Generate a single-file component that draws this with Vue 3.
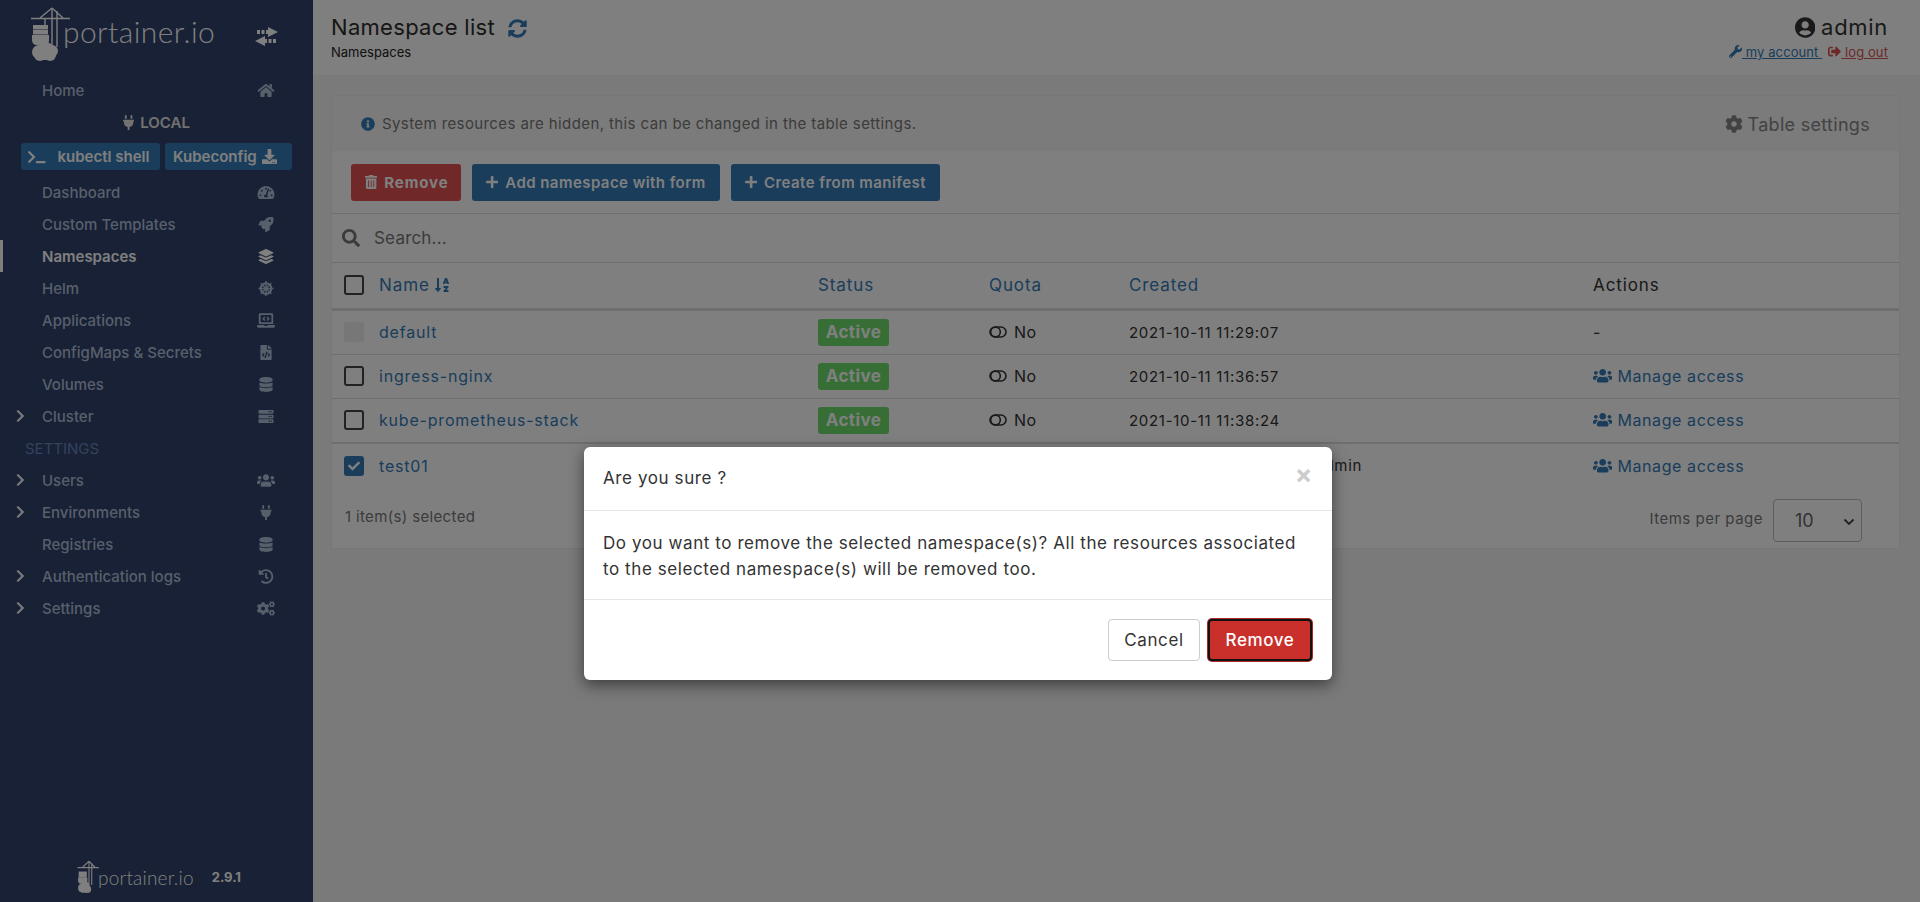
<script setup>
import { h } from 'vue'

const I = {
  home: [576, 'M280.37 148.26L96 300.11V464a16 16 0 0 0 16 16l112.06-.29a16 16 0 0 0 15.92-16V368a16 16 0 0 1 16-16h64a16 16 0 0 1 16 16v95.64a16 16 0 0 0 16 16.05L464 480a16 16 0 0 0 16-16V300L295.67 148.26a12.19 12.19 0 0 0-15.3 0zM571.6 251.47L488 182.56V44.05a12 12 0 0 0-12-12h-56a12 12 0 0 0-12 12v72.61L318.47 43a48 48 0 0 0-61 0L4.34 251.47a12 12 0 0 0-1.6 16.9l25.5 31A12 12 0 0 0 45.15 301l235.22-193.74a12.19 12.19 0 0 1 15.3 0L530.9 301a12 12 0 0 0 16.9-1.6l25.5-31a12 12 0 0 0-1.7-16.93z'],
  plug: [384, 'M320,32a32,32,0,0,0-64,0v96h64Zm48,128H16A16,16,0,0,0,0,176v32a16,16,0,0,0,16,16H32v32A160.07,160.07,0,0,0,160,412.8V512h64V412.8A160.07,160.07,0,0,0,352,256V224h16a16,16,0,0,0,16-16V176A16,16,0,0,0,368,160ZM128,32a32,32,0,0,0-64,0v96h64Z'],
  terminal: [640, 'M257.981 272.971L63.638 467.314c-9.373 9.373-24.569 9.373-33.941 0L7.029 444.647c-9.357-9.357-9.375-24.522-.04-33.901L161.011 256 6.99 101.255c-9.335-9.379-9.317-24.544.04-33.901l22.667-22.667c9.373-9.373 24.569-9.373 33.941 0L257.981 239.03c9.373 9.372 9.373 24.568 0 33.941zM640 456v-32c0-13.255-10.745-24-24-24H312c-13.255 0-24 10.745-24 24v32c0 13.255 10.745 24 24 24h304c13.255 0 24-10.745 24-24z'],
  download: [512, 'M216 0h80c13.3 0 24 10.7 24 24v168h87.7c17.8 0 26.7 21.5 14.1 34.1L269.7 378.3c-7.5 7.5-19.8 7.5-27.3 0L90.1 226.1c-12.6-12.6-3.7-34.1 14.1-34.1H192V24c0-13.3 10.7-24 24-24zm296 376v112c0 13.3-10.7 24-24 24H24c-13.3 0-24-10.7-24-24V376c0-13.3 10.7-24 24-24h146.7l49 49c20.1 20.1 52.5 20.1 72.6 0l49-49H488c13.3 0 24 10.7 24 24zm-124 88c0-11-9-20-20-20s-20 9-20 20 9 20 20 20 20-9 20-20zm64 0c0-11-9-20-20-20s-20 9-20 20 9 20 20 20 20-9 20-20z'],
  sync: [512, 'M370.72 133.28C339.458 104.008 298.888 87.962 255.848 88c-77.458.068-144.328 53.178-162.791 126.85-1.344 5.363-6.122 9.15-11.651 9.15H24.103c-7.498 0-13.194-6.807-11.807-14.176C33.933 94.924 134.813 8 256 8c66.448 0 126.791 26.136 171.315 68.685L463.03 40.97C478.149 25.851 504 36.559 504 57.941V192c0 13.255-10.745 24-24 24H345.941c-21.382 0-32.09-25.851-16.971-40.971l41.75-41.749zM32 296h134.059c21.382 0 32.09 25.851 16.971 40.971l-41.75 41.75c31.262 29.273 71.835 45.319 114.876 45.28 77.418-.07 144.315-53.144 162.787-126.849 1.344-5.363 6.122-9.15 11.651-9.15h57.304c7.498 0 13.194 6.807 11.807 14.176C478.067 417.076 377.187 504 256 504c-66.448 0-126.791-26.136-171.315-68.685L48.97 471.03C33.851 486.149 8 475.441 8 454.059V320c0-13.255 10.745-24 24-24z'],
  info: [512, 'M256 8C119.043 8 8 119.083 8 256c0 136.997 111.043 248 248 248s248-111.003 248-248C504 119.083 392.957 8 256 8zm0 110c23.196 0 42 18.804 42 42s-18.804 42-42 42-42-18.804-42-42 18.804-42 42-42zm56 254c0 6.627-5.373 12-12 12h-88c-6.627 0-12-5.373-12-12v-24c0-6.627 5.373-12 12-12h12v-64h-12c-6.627 0-12-5.373-12-12v-24c0-6.627 5.373-12 12-12h64c6.627 0 12 5.373 12 12v100h12c6.627 0 12 5.373 12 12v24z'],
  plus: [448, 'M416 208H272V64c0-17.67-14.33-32-32-32h-32c-17.67 0-32 14.33-32 32v144H32c-17.67 0-32 14.33-32 32v32c0 17.67 14.33 32 32 32h144v144c0 17.67 14.33 32 32 32h32c17.67 0 32-14.33 32-32V304h144c17.67 0 32-14.33 32-32v-32c0-17.67-14.33-32-32-32z'],
  search: [512, 'M505 442.7L405.3 343c-4.5-4.5-10.6-7-17-7H372c27.6-35.3 44-79.7 44-128C416 93.1 322.9 0 208 0S0 93.1 0 208s93.1 208 208 208c48.3 0 92.7-16.4 128-44v16.3c0 6.4 2.5 12.5 7 17l99.7 99.7c9.4 9.4 24.6 9.4 33.9 0l28.3-28.3c9.4-9.4 9.4-24.6.1-34zM208 336c-70.7 0-128-57.2-128-128 0-70.7 57.2-128 128-128 70.7 0 128 57.2 128 128 0 70.7-57.2 128-128 128z'],
  trash: [448, 'M32 464a48 48 0 0 0 48 48h288a48 48 0 0 0 48-48V128H32zm272-256a16 16 0 0 1 32 0v224a16 16 0 0 1-32 0zm-96 0a16 16 0 0 1 32 0v224a16 16 0 0 1-32 0zm-96 0a16 16 0 0 1 32 0v224a16 16 0 0 1-32 0zM432 32H312l-9.4-18.7A24 24 0 0 0 281.1 0H166.8a23.72 23.72 0 0 0-21.4 13.3L136 32H16A16 16 0 0 0 0 48v32a16 16 0 0 0 16 16h416a16 16 0 0 0 16-16V48a16 16 0 0 0-16-16z'],
  user: [496, 'M248 8C111 8 0 119 0 256s111 248 248 248 248-111 248-248S385 8 248 8zm0 96c48.6 0 88 39.4 88 88s-39.4 88-88 88-88-39.4-88-88 39.4-88 88-88zm0 344c-58.7 0-111.3-26.6-146.5-68.2 18.8-35.4 55.6-59.8 98.5-59.8 2.4 0 4.8.4 7.1 1.1 13 4.2 26.6 6.9 40.9 6.9 14.3 0 28-2.7 40.9-6.9 2.3-.7 4.7-1.1 7.1-1.1 42.9 0 79.7 24.4 98.5 59.8C359.3 421.4 306.7 448 248 448z'],
  wrench: [512, 'M507.73 109.1c-2.24-9.03-13.54-12.09-20.12-5.51l-74.36 74.36-67.88-11.31-11.31-67.88 74.36-74.36c6.62-6.62 3.43-17.9-5.66-20.16-47.38-11.74-99.55.91-136.58 37.93-39.64 39.64-50.55 97.1-34.05 147.2L18.74 402.76c-24.99 24.99-24.99 65.51 0 90.5 24.99 24.99 65.51 24.99 90.5 0l213.21-213.21c50.12 16.71 107.47 5.68 147.37-34.22 37.07-37.07 49.7-89.32 37.91-136.73zM64 472c-13.25 0-24-10.75-24-24 0-13.26 10.75-24 24-24s24 10.74 24 24c0 13.25-10.75 24-24 24z'],
  signout: [512, 'M497 273L329 441c-15 15-41 4.5-41-17v-96H152c-13.3 0-24-10.7-24-24v-96c0-13.3 10.7-24 24-24h136V88c0-21.4 25.9-32 41-17l168 168c9.3 9.4 9.3 24.6 0 34zM192 436v-40c0-6.6-5.4-12-12-12H96c-17.7 0-32-14.3-32-32V160c0-17.7 14.3-32 32-32h84c6.6 0 12-5.4 12-12V76c0-6.6-5.4-12-12-12H96c-53 0-96 43-96 96v192c0 53 43 96 96 96h84c6.6 0 12-5.4 12-12z'],
  cog: [512, 'M487.4 315.7l-42.6-24.6c4.3-23.2 4.3-47 0-70.2l42.6-24.6c4.9-2.8 7.1-8.6 5.5-14-11.1-35.6-30-67.8-54.7-94.6-3.8-4.1-10-5.1-14.8-2.3L380.8 110c-17.9-15.4-38.5-27.3-60.8-35.1V25.8c0-5.6-3.9-10.5-9.4-11.7-36.7-8.2-74.3-7.8-109.2 0-5.5 1.2-9.4 6.1-9.4 11.7V75c-22.2 7.9-42.8 19.8-60.8 35.1L88.7 85.5c-4.9-2.8-11-1.9-14.8 2.3-24.7 26.7-43.6 58.9-54.7 94.6-1.7 5.4.6 11.2 5.5 14L67.3 221c-4.3 23.2-4.3 47 0 70.2l-42.6 24.6c-4.9 2.8-7.1 8.6-5.5 14 11.1 35.6 30 67.8 54.7 94.6 3.8 4.1 10 5.1 14.8 2.3l42.6-24.6c17.9 15.4 38.5 27.3 60.8 35.1v49.2c0 5.6 3.9 10.5 9.4 11.7 36.7 8.2 74.3 7.8 109.2 0 5.5-1.2 9.4-6.1 9.4-11.7v-49.2c22.2-7.9 42.8-19.8 60.8-35.1l42.6 24.6c4.9 2.8 11 1.9 14.8-2.3 24.7-26.7 43.6-58.9 54.7-94.6 1.5-5.5-.7-11.3-5.6-14.1zM256 336c-44.1 0-80-35.9-80-80s35.9-80 80-80 80 35.9 80 80-35.9 80-80 80z'],
  users: [640, 'M96 224c35.3 0 64-28.7 64-64s-28.7-64-64-64-64 28.7-64 64 28.7 64 64 64zm448 0c35.3 0 64-28.7 64-64s-28.7-64-64-64-64 28.7-64 64 28.7 64 64 64zm32 32h-64c-17.6 0-33.5 7.1-45.1 18.6 40.3 22.1 68.9 62 75.1 109.4h66c17.7 0 32-14.3 32-32v-32c0-35.3-28.7-64-64-64zm-256 0c61.9 0 112-50.1 112-112S381.9 32 320 32 208 82.1 208 144s50.1 112 112 112zm76.8 32h-8.3c-20.8 10-43.9 16-68.5 16s-47.6-6-68.5-16h-8.3C179.6 288 128 339.6 128 403.2V432c0 26.5 21.5 48 48 48h288c26.5 0 48-21.5 48-48v-28.8c0-63.6-51.6-115.2-115.2-115.2zm-223.7-13.4C161.5 263.1 145.6 256 128 256H64c-35.3 0-64 28.7-64 64v32c0 17.7 14.3 32 32 32h65.9c6.3-47.4 34.9-87.3 75.2-109.4z'],
  database: [448, 'M448 73.143v45.714C448 159.143 347.667 192 224 192S0 159.143 0 118.857V73.143C0 32.857 100.333 0 224 0s224 32.857 224 73.143zM448 176v102.857C448 319.143 347.667 352 224 352S0 319.143 0 278.857V176c48.125 33.143 136.208 48.572 224 48.572S399.874 209.143 448 176zm0 160v102.857C448 479.143 347.667 512 224 512S0 479.143 0 438.857V336c48.125 33.143 136.208 48.572 224 48.572S399.874 369.143 448 336z'],
  server: [512, 'M480 160H32c-17.673 0-32-14.327-32-32V64c0-17.673 14.327-32 32-32h448c17.673 0 32 14.327 32 32v64c0 17.673-14.327 32-32 32zm-48-88c-13.255 0-24 10.745-24 24s10.745 24 24 24 24-10.745 24-24-10.745-24-24-24zm-64 0c-13.255 0-24 10.745-24 24s10.745 24 24 24 24-10.745 24-24-10.745-24-24-24zm112 248H32c-17.673 0-32-14.327-32-32v-64c0-17.673 14.327-32 32-32h448c17.673 0 32 14.327 32 32v64c0 17.673-14.327 32-32 32zm-48-88c-13.255 0-24 10.745-24 24s10.745 24 24 24 24-10.745 24-24-10.745-24-24-24zm-64 0c-13.255 0-24 10.745-24 24s10.745 24 24 24 24-10.745 24-24-10.745-24-24-24zm112 248H32c-17.673 0-32-14.327-32-32v-64c0-17.673 14.327-32 32-32h448c17.673 0 32 14.327 32 32v64c0 17.673-14.327 32-32 32zm-48-88c-13.255 0-24 10.745-24 24s10.745 24 24 24 24-10.745 24-24-10.745-24-24-24zm-64 0c-13.255 0-24 10.745-24 24s10.745 24 24 24 24-10.745 24-24-10.745-24-24-24z'],
  history: [512, 'M504 255.531c.253 136.64-111.18 248.372-247.82 248.468-59.015.042-113.223-20.53-155.822-54.911-11.077-8.94-11.905-25.541-1.839-35.607l11.267-11.267c8.609-8.609 22.353-9.551 31.891-1.984C173.062 425.135 212.781 440 256 440c101.705 0 184-82.311 184-184 0-101.705-82.311-184-184-184-48.814 0-93.149 18.969-126.068 49.932l50.754 50.754c10.08 10.08 2.941 27.314-11.313 27.314H24c-8.837 0-16-7.163-16-16V38.627c0-14.254 17.234-21.393 27.314-11.314l49.372 49.372C129.209 34.136 189.552 8 256 8c136.81 0 247.747 110.78 248 247.531zm-180.912 78.784l9.823-12.63c8.138-10.463 6.253-25.542-4.21-33.679L288 256.349V152c0-13.255-10.745-24-24-24h-16c-13.255 0-24 10.745-24 24v135.651l65.409 50.874c10.463 8.137 25.541 6.253 33.679-4.21z'],
  tacho: [576, 'M288 32C128.94 32 0 160.94 0 320c0 52.8 14.25 102.26 39.06 144.8 5.61 9.62 16.3 15.2 27.44 15.2h443c11.14 0 21.83-5.58 27.44-15.2C561.75 422.26 576 372.8 576 320c0-159.06-128.94-288-288-288zm0 64c14.71 0 26.58 10.13 30.32 23.65-1.11 2.26-2.64 4.23-3.45 6.67l-9.22 27.67c-5.13 3.49-10.97 6.01-17.64 6.01-17.67 0-32-14.33-32-32S270.33 96 288 96zM96 384c-17.67 0-32-14.33-32-32s14.33-32 32-32 32 14.33 32 32-14.33 32-32 32zm48-160c-17.67 0-32-14.33-32-32s14.33-32 32-32 32 14.33 32 32-14.33 32-32 32zm246.77-72.41l-61.33 184C343.13 347.33 352 364.54 352 384c0 11.72-3.38 22.55-8.88 32H232.88c-5.5-9.45-8.88-20.28-8.88-32 0-33.94 26.5-61.43 59.9-63.59l61.34-184.01c4.17-12.56 17.73-19.45 30.36-15.17 12.57 4.19 19.35 17.79 15.17 30.36zm14.66 57.2l15.52-46.55c3.47-1.29 7.13-2.23 11.05-2.23 17.67 0 32 14.33 32 32s-14.33 32-32 32c-11.38-.01-20.89-6.28-26.57-15.22zM480 384c-17.67 0-32-14.33-32-32s14.33-32 32-32 32 14.33 32 32-14.33 32-32 32z'],
  rocket: [512, 'M505.12019,19.09375c-1.18945-5.53125-6.65819-11-12.207-12.1875C460.716,0,435.507,0,410.40747,0,307.17523,0,245.26909,55.20312,199.05238,128H94.83772c-16.34763.01562-35.55658,11.875-42.88664,26.48438L2.51562,253.29688A28.4,28.4,0,0,0,0,264a24.00867,24.00867,0,0,0,24.00582,24H127.81618l-22.47457,22.46875c-11.36521,11.36133-12.99607,32.25781,0,45.25L156.24582,406.625c11.15623,11.1875,32.15619,13.15625,45.27726,0l22.47457-22.46875V488a24.00867,24.00867,0,0,0,24.00581,24,28.55934,28.55934,0,0,0,10.707-2.51562l98.72834-49.39063c14.62888-7.29687,26.50776-26.5,26.50776-42.85937V312.79688c72.59753-46.3125,128.03493-108.40626,128.03493-211.09376C512.07526,76.5,512.07526,51.29688,505.12019,19.09375ZM384.04033,168A40,40,0,1,1,424.05,128,40.02322,40.02322,0,0,1,384.04033,168Z'],
  layers: [512, 'M12.41 148.02l232.94 105.67c6.8 3.09 14.49 3.09 21.29 0l232.94-105.67c16.55-7.51 16.55-32.52 0-40.03L266.65 2.31a25.607 25.607 0 0 0-21.29 0L12.41 107.98c-16.55 7.51-16.55 32.53 0 40.04zm487.18 88.28l-58.09-26.33-161.64 73.27c-7.56 3.43-15.59 5.17-23.86 5.17s-16.29-1.74-23.86-5.17L70.51 209.97l-58.1 26.33c-16.55 7.5-16.55 32.5 0 40l232.94 105.59c6.8 3.08 14.49 3.08 21.29 0L499.59 276.3c16.55-7.5 16.55-32.5 0-40zm0 127.8l-57.87-26.23-161.86 73.37c-7.56 3.43-15.59 5.17-23.86 5.17s-16.29-1.74-23.86-5.17L70.29 337.87 12.41 364.1c-16.55 7.5-16.55 32.5 0 40l232.94 105.59c6.8 3.08 14.49 3.08 21.29 0L499.59 404.1c16.55-7.5 16.55-32.5 0-40z'],
  laptop: [640, 'M255.03 261.65c6.25 6.25 16.38 6.25 22.63 0l11.31-11.31c6.25-6.25 6.25-16.38 0-22.63L253.25 192l35.71-35.72c6.25-6.25 6.25-16.38 0-22.63l-11.31-11.31c-6.25-6.25-16.38-6.25-22.63 0l-58.34 58.34c-6.25 6.25-6.25 16.38 0 22.63l58.35 58.34zm96.01-11.3l11.31 11.31c6.25 6.25 16.38 6.25 22.63 0l58.34-58.34c6.25-6.25 6.25-16.38 0-22.63l-58.34-58.34c-6.25-6.25-16.38-6.25-22.63 0l-11.31 11.31c-6.25 6.25-6.25 16.38 0 22.63L386.75 192l-35.71 35.72c-6.25 6.25-6.25 16.38 0 22.63zM624 416H381.54c-.74 19.81-14.71 32-32.74 32H288c-18.69 0-33.02-17.47-32.77-32H16c-8.8 0-16 7.2-16 16v16c0 35.2 28.8 64 64 64h512c35.2 0 64-28.8 64-64v-16c0-8.8-7.2-16-16-16zM576 48c0-26.4-21.6-48-48-48H112C85.6 0 64 21.6 64 48v336h512V48zm-64 272H128V64h384v256z'],
  file: [384, 'M384 121.941V128H256V0h6.059c6.365 0 12.47 2.529 16.971 7.029l97.941 97.941A24.002 24.002 0 0 1 384 121.941zM248 160c-13.2 0-24-10.8-24-24V0H24C10.745 0 0 10.745 0 24v464c0 13.255 10.745 24 24 24h336c13.255 0 24-10.745 24-24V160H248zM123.206 400.505a5.4 5.4 0 0 1-7.633.246l-64.866-60.812a5.4 5.4 0 0 1 0-7.879l64.866-60.812a5.4 5.4 0 0 1 7.633.246l19.579 20.885a5.4 5.4 0 0 1-.372 7.747L101.65 336l40.763 35.874a5.4 5.4 0 0 1 .372 7.747l-19.579 20.884zm51.295 50.479l-27.453-7.97a5.402 5.402 0 0 1-3.681-6.692l61.44-211.626a5.402 5.402 0 0 1 6.692-3.681l27.452 7.97a5.4 5.4 0 0 1 3.68 6.692l-61.44 211.626a5.397 5.397 0 0 1-6.69 3.681zm160.792-111.045l-64.866 60.812a5.4 5.4 0 0 1-7.633-.246l-19.58-20.885a5.4 5.4 0 0 1 .373-7.747L284.35 336l-40.763-35.874a5.4 5.4 0 0 1-.373-7.747l19.58-20.885a5.4 5.4 0 0 1 7.633-.246l64.866 60.812a5.4 5.4 0 0 1 0 7.879z'],
  cogs: [640, 'M512.1 191l-8.2 14.3c-3 5.3-9.4 7.5-15.1 5.4-11.8-4.4-22.6-10.7-32.1-18.6-4.6-3.8-5.8-10.5-2.8-15.7l8.2-14.3c-6.9-8-12.3-17.3-15.9-27.4h-16.5c-6 0-11.2-4.3-12.2-10.3-2-12-2.1-24.6 0-37.1 1-6 6.2-10.4 12.2-10.4h16.5c3.6-10.1 9-19.4 15.9-27.4l-8.2-14.3c-3-5.2-1.9-11.9 2.8-15.7 9.5-7.9 20.4-14.2 32.1-18.6 5.7-2.1 12.1.1 15.1 5.4l8.2 14.3c10.5-1.9 21.2-1.9 31.7 0L552 6.3c3-5.3 9.4-7.5 15.1-5.4 11.8 4.4 22.6 10.7 32.1 18.6 4.6 3.8 5.8 10.5 2.8 15.7l-8.2 14.3c6.9 8 12.3 17.3 15.9 27.4h16.5c6 0 11.2 4.3 12.2 10.3 2 12 2.1 24.6 0 37.1-1 6-6.2 10.4-12.2 10.4h-16.5c-3.6 10.1-9 19.4-15.9 27.4l8.2 14.3c3 5.2 1.9 11.9-2.8 15.7-9.5 7.9-20.4 14.2-32.1 18.6-5.7 2.1-12.1-.1-15.1-5.4l-8.2-14.3c-10.4 1.9-21.2 1.9-31.7 0zm-10.5-58.8c38.5 29.6 82.4-14.3 52.8-52.8-38.5-29.7-82.4 14.3-52.8 52.8zM386.3 286.1l33.7 16.8c10.1 5.8 14.5 18.1 10.5 29.1-8.9 24.2-26.4 46.4-42.6 65.8-7.4 8.9-20.2 11.1-30.3 5.3l-29.1-16.8c-16 13.7-34.6 24.6-54.9 31.7v33.6c0 11.6-8.3 21.6-19.7 23.6-24.6 4.2-50.4 4.4-75.9 0-11.5-2-20-11.9-20-23.6V418c-20.3-7.2-38.9-18-54.9-31.7L74 403c-10 5.8-22.9 3.6-30.3-5.3-16.2-19.4-33.3-41.6-42.2-65.7-4-10.9.4-23.2 10.5-29.1l33.3-16.8c-3.9-20.9-3.9-42.4 0-63.4L12 205.8c-10.1-5.8-14.6-18.1-10.5-29 8.9-24.2 26-46.4 42.2-65.8 7.4-8.9 20.2-11.1 30.3-5.3l29.1 16.8c16-13.7 34.6-24.6 54.9-31.7V57.1c0-11.5 8.2-21.5 19.6-23.5 24.6-4.2 50.5-4.4 76-.1 11.5 2 20 11.9 20 23.6v33.6c20.3 7.2 38.9 18 54.9 31.7l29.1-16.8c10-5.8 22.9-3.6 30.3 5.3 16.2 19.4 33.2 41.6 42.1 65.8 4 10.9.1 23.2-10 29.1l-33.7 16.8c3.9 21 3.9 42.5 0 63.5zm-117.6 21.1c59.2-77-28.7-164.9-105.7-105.7-59.2 77 28.7 164.9 105.7 105.7zm243.4 182.7l-8.2 14.3c-3 5.3-9.4 7.5-15.1 5.4-11.8-4.4-22.6-10.7-32.1-18.6-4.6-3.8-5.8-10.5-2.8-15.7l8.2-14.3c-6.9-8-12.3-17.3-15.9-27.4h-16.5c-6 0-11.2-4.3-12.2-10.3-2-12-2.1-24.6 0-37.1 1-6 6.2-10.4 12.2-10.4h16.5c3.6-10.1 9-19.4 15.9-27.4l-8.2-14.3c-3-5.2-1.9-11.9 2.8-15.7 9.5-7.9 20.4-14.2 32.1-18.6 5.7-2.1 12.1.1 15.1 5.4l8.2 14.3c10.5-1.9 21.2-1.9 31.7 0l8.2-14.3c3-5.3 9.4-7.5 15.1-5.4 11.8 4.4 22.6 10.7 32.1 18.6 4.6 3.8 5.8 10.5 2.8 15.7l-8.2 14.3c6.9 8 12.3 17.3 15.9 27.4h16.5c6 0 11.2 4.3 12.2 10.3 2 12 2.1 24.6 0 37.1-1 6-6.2 10.4-12.2 10.4h-16.5c-3.6 10.1-9 19.4-15.9 27.4l8.2 14.3c3 5.2 1.9 11.9-2.8 15.7-9.5 7.9-20.4 14.2-32.1 18.6-5.7 2.1-12.1-.1-15.1-5.4l-8.2-14.3c-10.4 1.9-21.2 1.9-31.7 0zM501.6 431c38.5 29.6 82.4-14.3 52.8-52.8-38.5-29.6-82.4 14.3-52.8 52.8z'],
  chevron: [320, 'M285.476 272.971L91.132 467.314c-9.373 9.373-24.569 9.373-33.941 0l-22.667-22.667c-9.357-9.357-9.375-24.522-.04-33.901L188.505 256 34.484 101.255c-9.335-9.379-9.317-24.544.04-33.901l22.667-22.667c9.373-9.373 24.569-9.373 33.941 0L285.475 239.03c9.373 9.372 9.373 24.568.001 33.941z'],
  sort: [448, 'M176 352h-48V48a16 16 0 0 0-16-16H80a16 16 0 0 0-16 16v304H16c-14.19 0-21.36 17.24-11.3 27.31l80 96a16 16 0 0 0 22.62 0l80-96C197.35 369.26 190.22 352 176 352zm240-64H288a16 16 0 0 0-16 16v32a16 16 0 0 0 16 16h56l-61.26 70.45A32 32 0 0 0 272 446.37V464a16 16 0 0 0 16 16h128a16 16 0 0 0 16-16v-32a16 16 0 0 0-16-16h-56l61.26-70.45A32 32 0 0 0 432 321.63V304a16 16 0 0 0-16-16zm31.06-85.38l-59.27-160A16 16 0 0 0 372.72 32h-41.44a16 16 0 0 0-15.07 10.62l-59.27 160A16 16 0 0 0 272 224h24.83a16 16 0 0 0 15.23-11.08l4.42-12.92h71l4.41 12.92A16 16 0 0 0 407.16 224H432a16 16 0 0 0 15.06-21.38zM335.61 144L352 96l16.39 48z'],
  check: [512, 'M173.898 439.404l-166.4-166.4c-9.997-9.997-9.997-26.206 0-36.204l36.203-36.204c9.997-9.998 26.207-9.998 36.204 0L192 312.69 432.095 72.596c9.997-9.997 26.207-9.997 36.204 0l36.203 36.204c9.997 9.997 9.997 26.206 0 36.204l-294.4 294.401c-9.998 9.997-26.207 9.997-36.204-.001z']
}

const Fa = (props) => h('svg', { viewBox: `0 0 ${I[props.n][0]} 512`, class: 'fa', fill: 'currentColor' }, [h('path', { d: I[props.n][1] })])
Fa.props = ['n']

const topNav = [
  { t: 'Dashboard', i: 'tacho' },
  { t: 'Custom Templates', i: 'rocket' },
  { t: 'Namespaces', i: 'layers', active: true },
  { t: 'Helm', wheel: true },
  { t: 'Applications', i: 'laptop' },
  { t: 'ConfigMaps & Secrets', i: 'file' },
  { t: 'Volumes', i: 'database' },
  { t: 'Cluster', i: 'server', chev: true }
]
const setNav = [
  { t: 'Users', i: 'users', chev: true },
  { t: 'Environments', i: 'plug', chev: true },
  { t: 'Registries', i: 'database' },
  { t: 'Authentication logs', i: 'history', chev: true },
  { t: 'Settings', i: 'cogs', chev: true }
]
const rows = [
  { n: 'default', d: '2021-10-11 11:29:07', off: true },
  { n: 'ingress-nginx', d: '2021-10-11 11:36:57' },
  { n: 'kube-prometheus-stack', d: '2021-10-11 11:38:24', thick: true },
  { n: 'test01', d: '2021-10-12 09:14:33 by admin', sel: true }
]
</script>

<template>
  <div class="page">
    <aside class="side">
      <div class="brand">
        <svg class="crane" viewBox="0 0 44 56" width="44" height="56">
          <g fill="none" stroke="#fff" stroke-width="1.4">
            <path d="M1 12.500H40M22 2L10 12M22 2L33 12" />
            <path d="M22 2V41M27 5V41M15 12V19" />
          </g>
          <g fill="#fff">
            <rect x="3" y="19" width="15" height="4.500" />
            <rect x="3" y="24" width="15" height="4.500" />
            <path d="M2 29H19V35Q18 39 13 39H7Q2 39 2 34Z" />
            <circle cx="9" cy="46" r="7" />
            <circle cx="16" cy="43" r="7" />
            <circle cx="22" cy="45" r="6" />
            <circle cx="10" cy="49" r="6" />
            <circle cx="20" cy="49" r="6" />
            <rect x="8" y="42" width="14" height="12" />
          </g>
        </svg>
        <span class="brand-text">portainer.io</span>
        <svg class="swap" viewBox="0 0 23 21" width="23" height="21">
          <g fill="#fff">
            <path d="M2 4h3v4H2zM6.500 4h3v4h-3zM11 4h2V1l10 5-10 5V8h-2z" />
            <path d="M21 13h-3v4h3zM16.500 13h-3v4h3zM12 13h-2v-3L0 15l10 5v-3h2z" />
          </g>
        </svg>
      </div>
      <a class="nav"><span>Home</span><Fa n="home" class="nav-i" /></a>
      <div class="env"><Fa n="plug" class="env-i" />LOCAL</div>
      <div class="env-btns">
        <span class="ebtn shell"><Fa n="terminal" class="term" />kubectl shell</span>
        <span class="ebtn cfg">Kubeconfig<Fa n="download" class="dl" /></span>
      </div>
      <a v-for="x in topNav" :key="x.t" class="nav" :class="{ active: x.active }">
        <Fa v-if="x.chev" n="chevron" class="chev" />
        <span>{{ x.t }}</span>
        <svg v-if="x.wheel" class="fa nav-i" viewBox="0 0 16 16">
          <g fill="none" stroke="currentColor">
            <circle cx="8" cy="8" r="5.600" stroke-width="2.400" />
            <path d="M8 0V16M0 8H16M2.300 2.300L13.700 13.700M13.700 2.300L2.300 13.700" stroke-width="1.500" />
          </g>
          <circle cx="8" cy="8" r="2" fill="currentColor" />
        </svg>
        <Fa v-else :n="x.i" class="nav-i" />
      </a>
      <div class="section">SETTINGS</div>
      <a v-for="x in setNav" :key="x.t" class="nav">
        <Fa v-if="x.chev" n="chevron" class="chev" />
        <span>{{ x.t }}</span>
        <Fa :n="x.i" class="nav-i" />
      </a>
      <div class="foot">
        <svg class="crane-s" viewBox="0 0 44 56" width="24" height="34" preserveAspectRatio="none">
          <g fill="none" stroke="#fff" stroke-width="2">
            <path d="M1 12.500H40M22 2L10 12M22 2L33 12M22 2V41M27 5V41" />
          </g>
          <g fill="#fff">
            <rect x="3" y="19" width="15" height="10" />
            <path d="M2 29H19V35Q18 39 13 39H7Q2 39 2 34Z" />
            <circle cx="9" cy="46" r="7" />
            <circle cx="16" cy="43" r="7" />
            <circle cx="20" cy="48" r="6" />
            <rect x="8" y="42" width="12" height="12" />
          </g>
        </svg>
        <span class="foot-brand">portainer.io</span>
        <span class="ver">2.9.1</span>
      </div>
    </aside>

    <main class="main">
      <header class="top">
        <div>
          <div class="title">Namespace list <Fa n="sync" class="refresh" /></div>
          <div class="crumb">Namespaces</div>
        </div>
        <div class="who">
          <div class="admin"><Fa n="user" class="avatar" />admin</div>
          <div class="links">
            <a class="acc"><Fa n="wrench" class="li" /> my account </a>
            <a class="out"><Fa n="signout" class="li" /> log out</a>
          </div>
        </div>
      </header>

      <section class="widget">
        <div class="w-title">
          <span class="note"><Fa n="info" class="note-i" />System resources are hidden, this can be changed in the table settings.</span>
          <span class="tset"><Fa n="cog" class="tset-i" />Table settings</span>
        </div>
        <div class="actions">
          <button class="btn red"><Fa n="trash" class="bi" />Remove</button>
          <button class="btn blue"><Fa n="plus" class="bi" />Add namespace with form</button>
          <button class="btn blue"><Fa n="plus" class="bi" />Create from manifest</button>
        </div>
        <div class="search"><Fa n="search" class="s-i" /><span>Search...</span></div>
        <div class="grid head">
          <span class="cb"></span>
          <span class="lnk">Name <Fa n="sort" class="sort" /></span>
          <span class="lnk">Status</span>
          <span class="lnk">Quota</span>
          <span class="lnk">Created</span>
          <span>Actions</span>
        </div>
        <div v-for="r in rows" :key="r.n" class="grid row" :class="{ thick: r.thick, last: r.sel }">
          <span class="cb" :class="{ off: r.off, on: r.sel }"><Fa v-if="r.sel" n="check" class="ck" /></span>
          <span class="lnk name">{{ r.n }}</span>
          <span><span class="label">Active</span></span>
          <span class="quota">
            <svg class="tog" viewBox="0 0 18 12" width="18" height="12">
              <rect x="1" y="1" width="16" height="10" rx="5" fill="none" stroke="currentColor" stroke-width="1.600" />
              <circle cx="6.500" cy="6" r="4.800" fill="none" stroke="currentColor" stroke-width="1.600" />
            </svg>
            No
          </span>
          <span class="date">{{ r.d }}</span>
          <span v-if="r.off">-</span>
          <span v-else class="lnk manage"><Fa n="users" class="mi" />Manage access</span>
        </div>
        <div class="w-foot">
          <span class="sel">1 item(s) selected</span>
          <span class="per">Items per page</span>
          <span class="select">10
            <svg class="caret" viewBox="0 0 12 8" width="12" height="8"><path d="M1.500 1.500L6 6l4.500-4.500" fill="none" stroke="currentColor" stroke-width="1.800" /></svg>
          </span>
        </div>
      </section>
    </main>

    <div class="overlay">
      <div class="modal">
        <div class="m-head"><span>Are you sure ?</span><span class="x">×</span></div>
        <div class="m-body">Do you want to remove the selected namespace(s)? All the resources associated to the selected namespace(s) will be removed too.</div>
        <div class="m-foot">
          <button class="m-btn cancel">Cancel</button>
          <button class="m-btn remove">Remove</button>
        </div>
      </div>
    </div>
  </div>
</template>

<style>
html, body { margin: 0; height: 100%; background: #f4f4f4; }
</style>

<style scoped>
.page { position: relative; display: flex; height: 902px; overflow: hidden; font-family: Inter, "Noto Sans", sans-serif; color: #333; }
.fa { height: 1em; width: auto; display: inline-block; vertical-align: -0.125em; flex: none; }
button { font-family: inherit; }

.side { width: 313px; flex: none; background: #30426a; display: flex; flex-direction: column; }
.brand { height: 74px; position: relative; box-sizing: border-box; padding-left: 30px; display: flex; align-items: flex-start; }
.crane { margin-top: 6px; flex: none; }
.brand-text { font-family: Lato, sans-serif; font-weight: 300; font-size: 30px; color: #fff; margin: 13px 0 0 -11px; letter-spacing: .4px; }
.swap { position: absolute; left: 255px; top: 26px; }
.nav { position: relative; height: 32px; display: flex; align-items: center; padding-left: 42px; padding-right: 39px; justify-content: space-between; color: #b1bfd8; font-size: 15px; font-weight: 500; box-sizing: border-box; }
.nav.active { color: #fff; font-weight: 600; border-left: 3px solid #fff; padding-left: 39px; }
.nav-i { font-size: 15px; width: 18px; margin-right: -1px; }
.chev { position: absolute; left: 16px; font-size: 14px; color: #eee; }
.env { height: 32px; display: flex; align-items: center; justify-content: center; color: #e4e4e4; font-size: 15px; font-weight: 600; }
.env-i { font-size: 15px; margin-right: 6px; }
.env-btns { height: 38px; box-sizing: border-box; padding: 5px 21px 0; display: flex; gap: 5px; }
.ebtn { height: 27px; border-radius: 3px; background: #337ab7; color: #fff; font-size: 15px; font-weight: 600; display: flex; align-items: center; box-sizing: border-box; white-space: nowrap; }
.shell { width: 139px; padding-left: 7px; }
.cfg { width: 127px; padding-left: 8px; }
.term { font-size: 14px; margin-right: 12px; }
.dl { font-size: 15px; margin-left: 5px; }
.section { height: 32px; display: flex; align-items: center; padding-left: 25px; color: #6a83bb; font-size: 15px; }
.foot { margin-top: auto; height: 50px; padding: 0 0 0 77px; display: flex; align-items: center; }
.crane-s { flex: none; }
.foot-brand { font-family: Lato, sans-serif; font-weight: 300; font-size: 19px; color: #fff; margin-left: -3px; letter-spacing: .2px; }
.ver { color: #fff; font-size: 13px; font-weight: 700; margin-left: 18px; }

.main { flex: 1; min-width: 0; padding: 0 20px 0 0; }
.top { height: 75px; margin-right: -20px; background: #fff; display: flex; justify-content: space-between; box-sizing: border-box; padding: 0 32px 0 18px; }
.title { font-size: 22px; letter-spacing: .3px; margin-top: 13px; line-height: 29px; color: #2d2d2d; }
.refresh { font-size: 19px; color: #337ab7; margin-left: 7px; vertical-align: -3px; }
.crumb { font-size: 13px; line-height: 16px; margin-top: 2px; color: #222; }
.who { text-align: right; }
.admin { font-size: 22px; letter-spacing: .7px; line-height: 29px; margin-top: 13px; color: #333; display: flex; align-items: center; justify-content: flex-end; }
.avatar { font-size: 21px; margin-right: 6px; }
.links { font-size: 13px; letter-spacing: .1px; line-height: 16px; margin-top: 2px; }
.links a { text-decoration: underline; margin-left: 6px; white-space: pre; }
.acc { color: #337ab7; }
.out { color: #d9534f; }
.li { font-size: 13px; vertical-align: -1px; }

.widget { margin: 20px 0 0 18px; height: 454px; background: #fff; border: 1px solid #eee; box-sizing: border-box; display: flex; flex-direction: column; }
.w-title { height: 55px; flex: none; background: #f6f6f6; display: flex; justify-content: space-between; align-items: center; padding: 0 29px; box-sizing: border-box; }
.note { font-size: 15px; letter-spacing: .4px; color: #777; display: flex; align-items: center; }
.note-i { font-size: 14px; color: #337ab7; margin-right: 7px; }
.tset { font-size: 18px; letter-spacing: .3px; color: #858585; display: flex; align-items: center; margin-top: 1px; }
.tset-i { font-size: 18px; margin-right: 5px; }
.actions { height: 63px; flex: none; padding: 13px 0 0 19px; box-sizing: border-box; border-bottom: 1px solid #ddd; display: flex; gap: 11px; }
.btn { height: 37px; border-radius: 3px; border: 0; color: #fff; font-size: 15px; letter-spacing: .45px; font-weight: 600; padding: 0 14px 1px; display: flex; align-items: center; white-space: nowrap; }
.red { background: #e05050; width: 110px; font-weight: 700; letter-spacing: .9px; }
.blue { background: #337ab7; }
.bi { font-size: 14px; margin-right: 7px; }
.search { height: 49px; flex: none; border-bottom: 1px solid #ddd; display: flex; align-items: center; padding-left: 10px; font-size: 17px; letter-spacing: .2px; color: #777; box-sizing: border-box; }
.s-i { font-size: 18px; margin-right: 14px; }
.grid { display: grid; grid-template-columns: 47px 439px 171px 140px 464px 1fr; align-items: center; }
.head { height: 48px; flex: none; font-size: 17px; letter-spacing: .9px; padding-bottom: 2px; border-bottom: 3px solid #ddd; box-sizing: border-box; }
.row { height: 44px; flex: none; font-size: 16px; padding-bottom: 1px; border-bottom: 1px solid #ddd; box-sizing: border-box; }
.row.thick { height: 45px; border-bottom: 2px solid #ddd; }
.row.last { border-bottom: 0; }
.cb { width: 20px; height: 20px; margin-left: 12px; border: 2px solid #444; border-radius: 3px; box-sizing: border-box; display: flex; align-items: center; justify-content: center; }
.cb.off { border: 0; background: #eee; }
.cb.on { border: 0; background: #337ab7; color: #fff; }
.ck { font-size: 12px; }
.lnk { color: #337ab7; white-space: nowrap; }
.name { letter-spacing: .8px; }
.manage { letter-spacing: .6px; }
.sort { font-size: 16px; vertical-align: -2px; }
.label { display: inline-flex; width: 71px; height: 27px; align-items: center; justify-content: center; background: #6cdc6c; color: #fff; border-radius: 3px; font-weight: 700; font-size: 17px; letter-spacing: .4px; }
.quota { display: flex; align-items: center; gap: 7px; color: #333; letter-spacing: .5px; }
.date { white-space: nowrap; color: #333; font-size: 15px; letter-spacing: .7px; }
.mi { font-size: 15.500px; margin-right: 5px; }
.w-foot { flex: 1; display: flex; align-items: center; padding: 0 37px 0 13px; font-size: 15px; letter-spacing: .35px; color: #777; }
.sel { margin-right: auto; margin-top: -4px; }
.per { margin-right: 10px; margin-top: 1px; letter-spacing: .5px; }
.select { width: 89px; height: 43px; margin-top: 5px; box-sizing: border-box; border: 1px solid #bbb; border-radius: 4px; font-size: 18px; letter-spacing: 0; color: #666; padding-left: 21px; display: flex; align-items: center; position: relative; }
.caret { position: absolute; right: 6px; top: 18px; color: #444; }

.overlay { position: absolute; inset: 0; background: rgba(0,0,0,.5); display: flex; justify-content: center; padding-top: 447px; box-sizing: border-box; }
.modal { width: 748px; height: 233px; margin-right: 4px; background: #fff; border-radius: 6px; box-shadow: 0 5px 15px rgba(0,0,0,.5); display: flex; flex-direction: column; box-sizing: border-box; }
.m-head { height: 64px; flex: none; padding: 0 19px 1px; border-bottom: 1px solid #e5e5e5; box-sizing: border-box; display: flex; justify-content: space-between; align-items: center; font-size: 17px; letter-spacing: .6px; color: #333; }
.x { font-size: 26px; font-weight: 700; color: #ccc; margin-top: -6px; line-height: 1; }
.m-body { height: 89px; flex: none; padding: 19px 19px 0; box-sizing: border-box; font-size: 17px; letter-spacing: .58px; line-height: 26px; color: #333; border-bottom: 1px solid #e5e5e5; }
.m-foot { flex: 1; display: flex; justify-content: flex-end; gap: 8px; padding: 19px 20px 0 0; }
.m-btn { height: 42px; font-size: 17px; letter-spacing: .6px; border-radius: 4px; }
.cancel { width: 92px; background: #fff; border: 1px solid #ccc; color: #333; }
.remove { width: 104px; background: #c9302c; color: #fff; border: 2px solid #111; font-weight: 500; box-shadow: 0 0 0 1px #ac2925; }
</style>
